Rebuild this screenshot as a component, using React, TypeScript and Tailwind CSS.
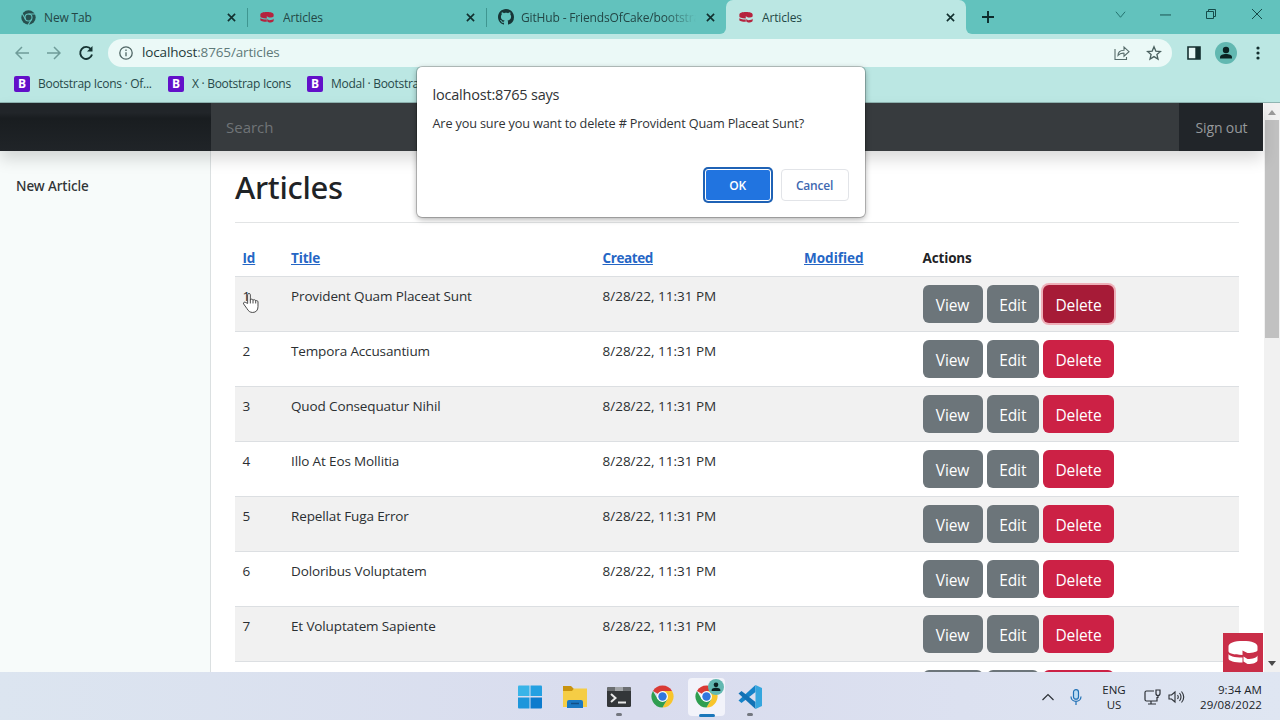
import type { ReactNode } from 'react';
import { clsx } from 'clsx';

interface Article {
  id: number;
  title: string;
  created: string;
}

const ARTICLES: Article[] = [
  { id: 1, title: 'Provident Quam Placeat Sunt', created: '8/28/22, 11:31 PM' },
  { id: 2, title: 'Tempora Accusantium', created: '8/28/22, 11:31 PM' },
  { id: 3, title: 'Quod Consequatur Nihil', created: '8/28/22, 11:31 PM' },
  { id: 4, title: 'Illo At Eos Mollitia', created: '8/28/22, 11:31 PM' },
  { id: 5, title: 'Repellat Fuga Error', created: '8/28/22, 11:31 PM' },
  { id: 6, title: 'Doloribus Voluptatem', created: '8/28/22, 11:31 PM' },
  { id: 7, title: 'Et Voluptatem Sapiente', created: '8/28/22, 11:31 PM' },
];

const COLS = 'grid grid-cols-[48.5px_311.5px_201.5px_118.5px_1fr]';

function CakeIcon({ className }: { className?: string }) {
  return (
    <svg viewBox="0 0 30 24" className={className} fill="currentColor">
      <path d="M15 0C6 0 .5 2 .5 5.500V10c0 2.500 5 3.800 14 4V9.500l5 2.500c6-.2 10-1.200 10-3V5.500C29.500 2 24 0 15 0z" />
      <path d="M.5 12.500v5c0 2.500 6 4 14 4v-5c-8 0-14-1.500-14-4z" />
      <path d="M15.500 15.500l4 2.500c5 0 10-1.500 10-3.800V19c0 2.500-4 4-10 4l-4-2.500z" />
    </svg>
  );
}

function ChromeIcon({ className }: { className?: string }) {
  return (
    <svg viewBox="0 0 24 24" className={className}>
      <path d="M12 12 2.040 6.250A11.500 11.500 0 0 1 21.960 6.250z" fill="#d93a35" />
      <path d="M12 12V6.250h9.960A11.500 11.500 0 0 1 12 23.500l5-8.600z" fill="#f8c52c" />
      <path d="M12 12l5 2.900-5 8.600A11.500 11.500 0 0 1 2.040 6.250L7 14.900z" fill="#2f9e50" />
      <circle cx="12" cy="12" r="5.700" fill="#fff" />
      <circle cx="12" cy="12" r="4.400" fill="#3277de" />
    </svg>
  );
}

function ChromeMonoIcon() {
  return (
    <svg viewBox="0 0 24 24" className="size-[15px]">
      <circle cx="12" cy="12" r="11.500" fill="#27504f" />
      <circle cx="12" cy="12" r="5.600" fill="none" stroke="#62c2bd" strokeWidth="1.800" />
      <path d="M12 6.400h11M7.200 14.800 1.700 5.300M16.800 14.800 11.300 24" stroke="#62c2bd" strokeWidth="1.800" />
    </svg>
  );
}

function GithubIcon() {
  return (
    <svg viewBox="0 0 16 16" className="size-4" fill="#173536">
      <path d="M8 0C3.580 0 0 3.580 0 8c0 3.540 2.290 6.530 5.470 7.590.4.070.55-.17.55-.38 0-.19-.01-.82-.01-1.490-2.010.37-2.530-.49-2.690-.94-.09-.23-.48-.94-.82-1.130-.28-.15-.68-.52-.01-.53.63-.01 1.080.58 1.230.82.72 1.210 1.870.87 2.330.66.070-.52.28-.87.51-1.070-1.780-.2-3.640-.89-3.640-3.950 0-.87.31-1.590.82-2.150-.08-.2-.36-1.020.08-2.120 0 0 .67-.21 2.200.82.64-.18 1.320-.27 2-.27s1.360.09 2 .27c1.530-1.040 2.200-.82 2.200-.82.44 1.100.16 1.920.08 2.120.51.56.82 1.270.82 2.150 0 3.070-1.870 3.750-3.650 3.950.29.25.54.73.54 1.480 0 1.070-.01 1.930-.01 2.200 0 .21.15.46.55.38A8.010 8.010 0 0 0 16 8c0-4.420-3.580-8-8-8z" />
    </svg>
  );
}

function PersonIcon({ className }: { className?: string }) {
  return (
    <svg viewBox="0 0 22 22" className={className}>
      <circle cx="11" cy="11" r="11" fill="#62b8b1" />
      <circle cx="11" cy="8" r="3.200" fill="#0b2222" />
      <path d="M5 16.500v-1.300c0-2 3-3.100 6-3.100s6 1.100 6 3.100v1.300z" fill="#0b2222" />
    </svg>
  );
}

function CloseIcon() {
  return (
    <svg viewBox="0 0 10 10" className="size-[9px] shrink-0" stroke="#12302f" strokeWidth="1.800">
      <path d="M1 1l8 8M9 1 1 9" />
    </svg>
  );
}

function Tab({ icon, title, fade, className }: { icon: ReactNode; title: string; fade?: boolean; className?: string }) {
  return (
    <div className={clsx('flex h-full shrink-0 items-center', className)}>
      <span className="flex w-[23px] shrink-0 items-center">{icon}</span>
      <span
        className={clsx(
          'min-w-0 grow overflow-hidden pt-px text-[12px] tracking-[-0.15px] whitespace-nowrap text-[#234746]',
          fade && 'mr-[10px] mask-r-from-82% mask-r-to-100%'
        )}
      >
        {title}
      </span>
      <CloseIcon />
    </div>
  );
}

function TabStrip() {
  return (
    <div className="flex h-[34px] bg-[#62c2bd]">
      <Tab className="ml-[21px] w-[215px]" icon={<ChromeMonoIcon />} title="New Tab" />
      <span className="mt-2 ml-[11px] h-[19px] w-px bg-[#3f9691]" />
      <Tab className="ml-[12px] w-[215px]" icon={<CakeIcon className="h-[11px] w-[14px] text-[#b5233e]" />} title="Articles" />
      <span className="mt-2 ml-[11px] h-[19px] w-px bg-[#3f9691]" />
      <Tab className="ml-[11px] w-[217px]" icon={<GithubIcon />} title="GitHub - FriendsOfCake/bootstrap" fade />
      <div className="ml-[5px] flex bg-[#bbe7e3]">
        <span className="h-full w-[6px] rounded-br-[6px] bg-[#62c2bd]" />
      </div>
      <div className="flex h-full w-[240px] rounded-t-[7px] bg-[#bbe7e3] pr-[11px] pl-[13px]">
        <Tab className="w-full" icon={<CakeIcon className="h-[11px] w-[14px] text-[#b5233e]" />} title="Articles" />
      </div>
      <div className="flex bg-[#bbe7e3]">
        <span className="h-full w-[14px] rounded-bl-[6px] bg-[#62c2bd]" />
      </div>
      <svg viewBox="0 0 12 12" className="mt-[11px] ml-[2px] size-3" stroke="#0d2b2b" strokeWidth="1.900">
        <path d="M6 0v12M0 6h12" />
      </svg>
      <div className="mt-[8px] ml-auto flex h-3 items-center gap-[34px] pr-[17px]">
        <svg viewBox="0 0 12 12" className="size-[11px]" fill="none" stroke="#1f6b68">
          <path d="M1 3l5 6 5-6" />
        </svg>
        <svg viewBox="0 0 12 12" className="size-[11px]" stroke="#154b49">
          <path d="M0 6.500h12" />
        </svg>
        <svg viewBox="0 0 12 12" className="size-3" fill="none" stroke="#154b49">
          <path d="M1.500 3.500h7v7h-7zM3.500 3V1.500h7v7H9" />
        </svg>
        <svg viewBox="0 0 12 12" className="size-3" stroke="#154b49">
          <path d="M1 1l10 10M11 1 1 11" />
        </svg>
      </div>
    </div>
  );
}

function Toolbar() {
  return (
    <div className="flex h-[37px] items-center bg-[#bbe7e3] pl-[15px]">
      <svg viewBox="0 0 14 14" className="size-[14px]" fill="none" stroke="#6f9c99" strokeWidth="1.500">
        <path d="M14 7H1.500M7 1 1 7l6 6" />
      </svg>
      <svg viewBox="0 0 14 14" className="ml-[18px] size-[14px]" fill="none" stroke="#6f9c99" strokeWidth="1.500">
        <path d="M0 7h12.500M7 1l6 6-6 6" />
      </svg>
      <svg viewBox="0 0 16 16" className="ml-[17px] size-4" fill="none" stroke="#153332" strokeWidth="1.900">
        <path d="M13 4.300A6 6 0 1 0 14 9.500" />
        <path d="M14.500 1v5.500H9z" fill="#153332" stroke="none" />
      </svg>
      <div className="ml-[14px] flex h-7 w-[1064px] items-center rounded-full bg-[#ebf9f7] pr-[10px] pl-[11px]">
        <svg viewBox="0 0 14 14" className="size-[14px]" fill="none" stroke="#4f6564" strokeWidth="1.300">
          <circle cx="7" cy="7" r="6.200" />
          <path d="M7 6.200v4M7 3.500v1.500" />
        </svg>
        <span className="ml-[9px] grow text-[13.500px] tracking-[-0.15px] text-[#24393a]">
          localhost<span className="text-[#5f7a79]">:8765/articles</span>
        </span>
        <svg viewBox="0 0 16 16" className="size-4" fill="none" stroke="#566c6b" strokeWidth="1.100">
          <path d="M1 4v10.500h11.500V12M4 10.500C4 7 6.500 5.300 10 5.200V2l5 4.700-5 4.500V8.200C7 8 5.300 8.800 4 10.500z" />
        </svg>
        <svg viewBox="0 0 16 16" className="ml-4 size-4" fill="none" stroke="#4a605f" strokeWidth="1.300">
          <path d="M8 1.800l1.800 4.300 4.700.4-3.600 3 1.100 4.600L8 11.600l-4 2.500 1.100-4.600-3.600-3 4.700-.4z" />
        </svg>
      </div>
      <svg viewBox="0 0 14 14" className="ml-[15px] size-[14px]">
        <path d="M1 1h12v12H1z" fill="#e6f7f5" stroke="#142f2f" strokeWidth="1.600" />
        <path d="M8.300 1H13v12H8.300z" fill="#142f2f" />
      </svg>
      <PersonIcon className="ml-[14px] size-[22px]" />
      <svg viewBox="0 0 4 14" className="ml-[19px] h-[14px] w-1" fill="#142f2f">
        <circle cx="2" cy="2" r="1.600" />
        <circle cx="2" cy="7" r="1.600" />
        <circle cx="2" cy="12" r="1.600" />
      </svg>
    </div>
  );
}

function Bookmark({ title, className }: { title: string; className?: string }) {
  return (
    <div className={clsx('flex shrink-0 items-center', className)}>
      <span className="flex size-4 items-center justify-center rounded-[2px] bg-[#6210c9] text-[12px] font-bold text-white">B</span>
      <span className="ml-2 text-[12px] tracking-[-0.28px] whitespace-nowrap text-[#27494a]">{title}</span>
    </div>
  );
}

function Bookmarks() {
  return (
    <div className="flex h-8 border-b border-[#8fb5b2] bg-[#bbe7e3] pb-[5px] pl-[14px]">
      <Bookmark className="w-[154px]" title="Bootstrap Icons · Of..." />
      <Bookmark className="w-[139px]" title="X · Bootstrap Icons" />
      <Bookmark className="w-[139px]" title="Modal · Bootstrap" />
    </div>
  );
}

function NavBar() {
  return (
    <div className="relative z-10 flex h-12 shrink-0 bg-[#212529] shadow-[0_8px_16px_rgba(0,0,0,0.15)]">
      <div className="w-[211px] bg-linear-to-b from-[#212529] from-20% via-[#191d20] via-32% to-[#202428]" />
      <div className="flex grow items-center bg-[#373b3e] pt-px pl-[15px] text-[15px] text-[#707477]">Search</div>
      <div className="flex w-[84px] items-center justify-center pl-px text-[14px] tracking-[-0.15px] text-[#96999b]">Sign out</div>
    </div>
  );
}

function ActionButton({ label, className }: { label: string; className: string }) {
  return (
    <button className={clsx('h-[38px] rounded-[6px] pt-[2px] text-[15.500px] tracking-[-0.1px] text-white', className)}>
      {label}
    </button>
  );
}

function ArticleRow({ article, striped, active }: { article: Article; striped: boolean; active: boolean }) {
  return (
    <div
      className={clsx(
        COLS,
        'h-[55px] shrink-0 border-b border-[#dcdfe2] pt-2 pr-2 pl-[7.500px] text-[13.500px] leading-[22px]',
        striped && 'bg-[#f1f1f1]'
      )}
    >
      <span>{article.id}</span>
      <span className="tracking-[-0.13px]">{article.title}</span>
      <span>{article.created}</span>
      <span />
      <div className="flex gap-1">
        <ActionButton label="View" className="w-[60px] bg-[#6c757a]" />
        <ActionButton label="Edit" className="w-[52.500px] bg-[#6c757a]" />
        <ActionButton
          label="Delete"
          className={clsx('w-[71px]', active ? 'bg-[#a61b37] shadow-[0_0_0_2px_#eeafb8]' : 'bg-[#cc2145]')}
        />
      </div>
    </div>
  );
}

function ArticlesPage() {
  return (
    <main className="flex min-w-0 grow flex-col overflow-hidden pr-[24px] pl-6 text-[#2b2f32]">
      <h1 className="mt-[15px] h-[57px] shrink-0 border-b border-[#e2e4e5] font-['Noto_Sans'] text-[31px] leading-[43px] font-medium tracking-[-0.3px] text-[#1f2326]">
        Articles
      </h1>
      <div className={clsx(COLS, 'mt-4 h-[38px] shrink-0 border-b border-[#dcdfe2] pt-2 pr-2 pl-[7.500px] text-[13.500px] leading-[22px] font-bold tracking-[-0.15px] text-[#2566c5]')}>
        <span className="underline">Id</span>
        <span className="underline">Title</span>
        <span className="tracking-[-0.4px] underline">Created</span>
        <span className="tracking-normal underline">Modified</span>
        <span className="text-[#1f2326]">Actions</span>
      </div>
      {ARTICLES.map((article, i) => (
        <ArticleRow key={article.id} article={article} striped={i % 2 === 0} active={i === 0} />
      ))}
      {/* Next row, only its top edge is scrolled into view */}
      <div className={clsx(COLS, 'shrink-0 pt-2 pl-[7.500px]')}>
        <div className="col-start-5 flex gap-1">
          <span className="h-[38px] w-[60px] rounded-[6px] bg-[#6c757a]" />
          <span className="h-[38px] w-[52.500px] rounded-[6px] bg-[#6c757a]" />
          <span className="h-[38px] w-[71px] rounded-[6px] bg-[#cc2145]" />
        </div>
      </div>
    </main>
  );
}

function Scrollbar() {
  return (
    <div className="flex w-4 shrink-0 flex-col items-center bg-[#f1f1f1]">
      <svg viewBox="0 0 8 5" className="mt-[7px] h-[5px] w-2" fill="#9a9a9a">
        <path d="M0 5 4 0l4 5z" />
      </svg>
      <span className="mt-[5px] h-[218px] w-[14px] bg-[#c1c1c1]" />
      <svg viewBox="0 0 8 5" className="mt-auto mb-[6px] h-[5px] w-2" fill="#4a4a4a">
        <path d="M0 0l4 5 4-5z" />
      </svg>
    </div>
  );
}

function ConfirmDialog() {
  return (
    <div className="absolute top-[67px] left-[416.500px] z-20 h-[150px] w-[448px] rounded-[5px] bg-white px-4 pt-[17px] text-[#303336] shadow-[0_0_0_1px_rgba(0,0,0,0.2),0_2px_6px_rgba(0,0,0,0.35)]">
      <p className="text-[14.500px] leading-[22px] tracking-[-0.2px]">localhost:8765 says</p>
      <p className="mt-[7px] text-[12.700px] leading-5 tracking-[-0.16px] whitespace-nowrap">
        Are you sure you want to delete # Provident Quam Placeat Sunt?
      </p>
      <div className="mt-[36px] flex justify-end gap-[10px] text-[12px] font-semibold tracking-[-0.2px]">
        <button className="h-8 w-[66px] rounded-[3px] border border-white bg-[#2174e0] pt-px text-white shadow-[0_0_0_2px_#1f62b5]">
          OK
        </button>
        <button className="h-8 w-[68px] rounded-[4px] border border-[#e2e4e8] pt-px text-[#4068b0]">Cancel</button>
      </div>
    </div>
  );
}

function HandCursor() {
  return (
    <svg viewBox="0 0 18 24" className="absolute top-[291px] left-[242px] z-10 h-[23px] w-[18px]" fill="#fff" stroke="#444" strokeWidth="1">
      <path d="M5.500 13V4c0-2 2.800-2 2.800 0v5.500c.3-1.500 2.700-1.300 2.800.2.5-1 2.700-.8 2.800.7.700-.8 2.400-.4 2.400 1v5c0 3.500-2 6-5.500 6-3 0-4.500-1.500-6-4L1.300 13.500c-.8-1.500 1-2.500 2.200-1.500z" />
      <path d="M8.300 9v4M11.100 9.500V13M13.900 10.500V13" fill="none" />
    </svg>
  );
}

function Taskbar() {
  return (
    <div className="flex h-12 bg-linear-to-r from-[#dce5f0] via-[#d9dcee] to-[#dfe6f2]">
      <div className="ml-[510px] flex h-full items-center pt-px">
        <span className="flex w-10 justify-center">
          <svg viewBox="0 0 24 24" className="size-6" fill="#1589d6">
            <path d="M1 .500h10.500V11H0V1.500q0-1 1-1z" fill="#39b4e8" />
            <path d="M12.500.500H23q1 0 1 1V11H12.500z" fill="#24a0e2" />
            <path d="M0 12.500h11.500v11H1q-1 0-1-1z" fill="#1d96db" />
            <path d="M12.500 12.500H24v10q0 1-1 1H12.500z" fill="#0d7bcd" />
          </svg>
        </span>
        <span className="ml-[5px] flex w-10 justify-center">
          <svg viewBox="0 0 26 24" className="h-6 w-[26px]">
            <path d="M1 1h8l3 3v5H1z" fill="#c9930f" />
            <path d="M1 6h9l2-2.500h13V22H1z" fill="#f5cd45" />
            <path d="M5 23v-6q0-2 2-2h12q2 0 2 2v6z" fill="#1a78c2" />
            <path d="M9 18.500h8" stroke="#114f86" strokeWidth="1.500" />
          </svg>
        </span>
        <span className="relative ml-1 flex w-10 justify-center">
          <svg viewBox="0 0 24 20" className="h-5 w-6">
            <rect width="24" height="20" rx="1.500" fill="#333639" />
            <path d="M0 4V1.500Q0 0 1.500 0h21Q24 0 24 1.500V4z" fill="#6b6e71" />
            <path d="M8 0h8v4H8z" fill="#a2a5a8" />
            <path d="M4 7l4.500 4L4 15M11 15.500h8" fill="none" stroke="#e8e8e8" strokeWidth="2" />
          </svg>
          <span className="absolute top-[26px] h-[3px] w-[6px] rounded-full bg-[#73777f]" />
        </span>
        <span className="ml-[3px] flex w-10 justify-center"><ChromeIcon className="size-[23px]" /></span>
        <span className="relative ml-[6px] flex h-[38px] w-[37px] items-center justify-center rounded-[4px] bg-[#f2f3fa]">
          <ChromeIcon className="size-[23px]" />
          <PersonIcon className="absolute top-[1px] right-[1px] size-4" />
          <span className="absolute -bottom-px h-[3px] w-4 rounded-full bg-[#1b77ba]" />
        </span>
        <span className="relative ml-[5px] flex w-10 justify-center">
          <svg viewBox="0 0 24 24" className="size-6">
            <path d="M17.500 0v7L3.500 18 .5 15.500z" fill="#1583c9" />
            <path d="M17.500 24v-7L3.500 6 .5 8.500z" fill="#1272b5" />
            <path d="M17.500 0 24 3v18l-6.500 3z" fill="#35a6de" />
          </svg>
          <span className="absolute top-[28px] h-[3px] w-[6px] rounded-full bg-[#73777f]" />
        </span>
      </div>
      <div className="ml-auto flex items-center pt-px pr-[18px] text-[11.500px] leading-[15px] text-[#202328]">
        <svg viewBox="0 0 12 8" className="h-2 w-3" fill="none" stroke="#2c3036" strokeWidth="1.200">
          <path d="M.500 7 6 1.500 11.500 7" />
        </svg>
        <svg viewBox="0 0 12 16" className="ml-4 h-4 w-3" fill="none" stroke="#1f70b5" strokeWidth="1.200">
          <rect x="3.500" y=".700" width="5" height="9.500" rx="2.500" fill="#bddcf3" />
          <path d="M1 7.500c0 6.500 10 6.500 10 0M6 12.500V16" />
        </svg>
        <span className="ml-[18px] w-7 text-center">ENG<br />US</span>
        <svg viewBox="0 0 17 16" className="ml-[16px] h-4 w-[17px]" fill="none" stroke="#2c3036" strokeWidth="1.200">
          <path d="M10 2H2.500Q1 2 1 3.500v7Q1 12 2.500 12H13V8M7 12v3M4 15h8M12 1h4v3.500q0 2-2 2t-2-2zM14 6.500V9" />
        </svg>
        <svg viewBox="0 0 17 16" className="ml-[7px] h-4 w-[17px]" fill="none" stroke="#2c3036" strokeWidth="1.100">
          <path d="M1 6v4h2.500L7 13V3L3.500 6zM9.500 6q1.500 2 0 4M11.500 4q3 4 0 8M13.500 2.500q4.500 5.500 0 11" />
        </svg>
        <span className="ml-[13px] w-[64px] text-right tracking-[0.1px] whitespace-nowrap">9:34 AM<br />29/08/2022</span>
      </div>
    </div>
  );
}

export default function App() {
  return (
    <div className="relative flex h-[720px] w-[1280px] flex-col overflow-hidden bg-white font-['Open_Sans','Noto_Sans',sans-serif]">
      <TabStrip />
      <Toolbar />
      <Bookmarks />
      <div className="relative flex h-[569px] shrink-0">
        <div className="flex w-[1263px] shrink-0 flex-col">
          <NavBar />
          <div className="flex min-h-0 grow">
            <aside className="w-[211px] shrink-0 border-r border-[#dbe0e1] bg-[#f7fbfa] pt-6 pl-4 font-['Noto_Sans'] text-[13.500px] leading-[22px] font-medium tracking-[-0.1px] text-[#303436]">
              New Article
            </aside>
            <ArticlesPage />
          </div>
        </div>
        <span className="w-px bg-white" />
        <Scrollbar />
        <span className="absolute right-[17px] bottom-0 z-10 flex h-[39px] w-10 items-center justify-center bg-[#c92e48]">
          <CakeIcon className="h-[24px] w-[30px] text-white" />
        </span>
      </div>
      <Taskbar />
      <ConfirmDialog />
      <HandCursor />
    </div>
  );
}
